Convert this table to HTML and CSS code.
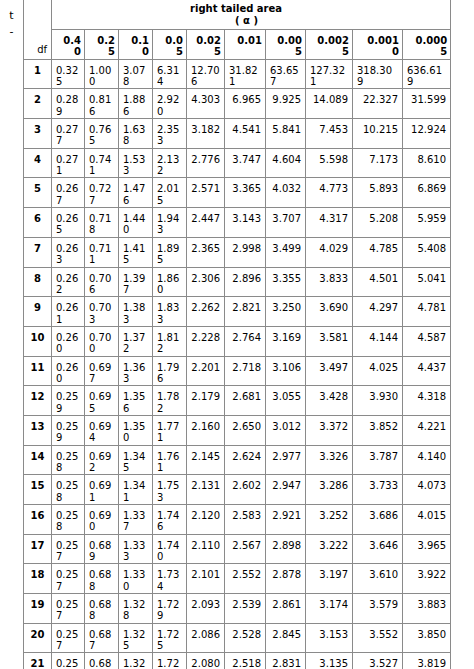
FILE: index.html
```html
<!DOCTYPE html>
<html>
<head>
<meta charset="utf-8">
<link rel="stylesheet" href="styles.css">
</head>
<body>
<div class="page">
  <div class="side">t<br>-</div>
  <table class="ttable">
    <colgroup>
      <col class="c-df"><col class="c1"><col class="c2"><col class="c3"><col class="c4"><col class="c5"><col class="c6"><col class="c7"><col class="c8"><col class="c9"><col class="c10">
    </colgroup>
    <thead>
      <tr>
        <th class="df-head" rowspan="2">df</th>
        <th class="title" colspan="10"><span class="t1">right tailed area</span><span class="t2">( α )</span></th>
      </tr>
      <tr class="alphas">
        <th>0.40</th><th>0.25</th><th>0.10</th><th>0.05</th><th>0.025</th><th>0.01</th><th>0.005</th><th>0.0025</th><th>0.0010</th><th>0.0005</th>
      </tr>
    </thead>
    <tbody id="rows"></tbody>
  </table>
</div>
<script src="app.js"></script>
</body>
</html>
```
FILE: styles.css
```css
html, body {
  margin: 0;
  padding: 0;
  background: #ffffff;
}
body {
  font-family: "DejaVu Sans", Verdana, sans-serif;
  font-size: 10px;
  color: #000000;
}
.page {
  display: flex;
  align-items: flex-start;
}
.side {
  width: 23px;
  flex: none;
  text-align: center;
  font-size: 11px;
  line-height: 16px;
  padding-top: 8px;
}
.ttable {
  table-layout: fixed;
  width: 428px;
  border-collapse: separate;
  border-spacing: 0;
  border-left: 1px solid #8a8a8a;
  flex: none;
}
.c-df { width: 28px; }
.c1 { width: 33px; }
.c2 { width: 34px; }
.c3 { width: 34px; }
.c4 { width: 34px; }
.c5 { width: 38px; }
.c6 { width: 41px; }
.c7 { width: 40px; }
.c8 { width: 47px; }
.c9 { width: 50px; }
.c10 { width: 48px; }
.ttable th, .ttable td {
  border-right: 1px solid #8a8a8a;
  border-bottom: 1px solid #8a8a8a;
  padding: 5px 4px 1px 4px;
  line-height: 11.35px;
  vertical-align: top;
  word-break: break-all;
  overflow-wrap: anywhere;
}
.df-head {
  vertical-align: bottom !important;
  text-align: right;
  font-weight: normal;
  padding-bottom: 3px !important;
}
.ttable .title {
  text-align: center;
  font-weight: bold;
  padding: 3px 0 2px 0;
  line-height: 12px;
}
.t1 {
  display: block;
  padding-right: 30px;
}
.t2 {
  display: block;
  padding-right: 9px;
}
.ttable .alphas th {
  text-align: right;
  font-weight: bold;
  padding: 5px 3px 1px 8px;
}
.ttable tbody th {
  text-align: center;
  font-weight: bold;
}
.ttable td {
  text-align: right;
}
.v {
  display: inline-block;
  text-align: left;
}
```
FILE: app.js
```js
var data = [
  [0.325,1.000,3.078,6.314,12.706,31.821,63.657,127.321,318.309,636.619],
  [0.289,0.816,1.886,2.920,4.303,6.965,9.925,14.089,22.327,31.599],
  [0.277,0.765,1.638,2.353,3.182,4.541,5.841,7.453,10.215,12.924],
  [0.271,0.741,1.533,2.132,2.776,3.747,4.604,5.598,7.173,8.610],
  [0.267,0.727,1.476,2.015,2.571,3.365,4.032,4.773,5.893,6.869],
  [0.265,0.718,1.440,1.943,2.447,3.143,3.707,4.317,5.208,5.959],
  [0.263,0.711,1.415,1.895,2.365,2.998,3.499,4.029,4.785,5.408],
  [0.262,0.706,1.397,1.860,2.306,2.896,3.355,3.833,4.501,5.041],
  [0.261,0.703,1.383,1.833,2.262,2.821,3.250,3.690,4.297,4.781],
  [0.260,0.700,1.372,1.812,2.228,2.764,3.169,3.581,4.144,4.587],
  [0.260,0.697,1.363,1.796,2.201,2.718,3.106,3.497,4.025,4.437],
  [0.259,0.695,1.356,1.782,2.179,2.681,3.055,3.428,3.930,4.318],
  [0.259,0.694,1.350,1.771,2.160,2.650,3.012,3.372,3.852,4.221],
  [0.258,0.692,1.345,1.761,2.145,2.624,2.977,3.326,3.787,4.140],
  [0.258,0.691,1.341,1.753,2.131,2.602,2.947,3.286,3.733,4.073],
  [0.258,0.690,1.337,1.746,2.120,2.583,2.921,3.252,3.686,4.015],
  [0.257,0.689,1.333,1.740,2.110,2.567,2.898,3.222,3.646,3.965],
  [0.257,0.688,1.330,1.734,2.101,2.552,2.878,3.197,3.610,3.922],
  [0.257,0.688,1.328,1.729,2.093,2.539,2.861,3.174,3.579,3.883],
  [0.257,0.687,1.325,1.725,2.086,2.528,2.845,3.153,3.552,3.850],
  [0.257,0.686,1.323,1.721,2.080,2.518,2.831,3.135,3.527,3.819]
];
var tbody = document.getElementById('rows');
var html = '';
for (var i = 0; i < data.length; i++) {
  html += '<tr><th>' + (i + 1) + '</th>';
  for (var j = 0; j < data[i].length; j++) {
    html += '<td><span class="v">' + data[i][j].toFixed(3) + '</span></td>';
  }
  html += '</tr>';
}
tbody.innerHTML = html;
```
